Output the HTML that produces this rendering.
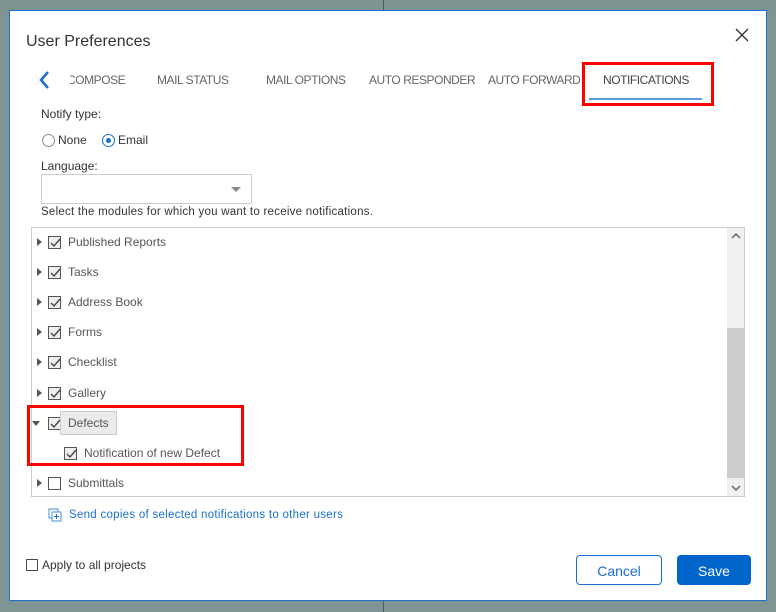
<!DOCTYPE html>
<html><head><meta charset="utf-8"><style>
*{box-sizing:border-box;margin:0;padding:0}
body{width:776px;height:612px;background:#7f9593;position:relative;overflow:hidden;font-family:"Liberation Sans",sans-serif;color:#333}
.a{position:absolute;white-space:nowrap}
#dlg{position:absolute;left:9px;top:10px;width:758px;height:591px;background:#fff;border:1px solid #1a6fd0}
.tab{position:absolute;top:73px;font-size:12px;color:#666;letter-spacing:-0.45px}
.cb{position:absolute;width:13px;height:13px;border:1px solid #555;background:#eee}
.cb svg{position:absolute;left:1px;top:0}
.tri{position:absolute;width:0;height:0;border-top:4px solid transparent;border-bottom:4px solid transparent;border-left:5px solid #555}
.lbl{position:absolute;font-size:12px;color:#555}
</style></head><body>
<div class="a" style="left:0;top:0;width:776px;height:10px;background:#7d9390"></div>
<div class="a" style="left:383px;top:0;width:1px;height:10px;background:#556"></div>
<div class="a" style="left:383px;top:601px;width:1px;height:11px;background:#556"></div>
<div id="dlg"></div>
<div class="a" style="left:26px;top:33px;font-size:16px;color:#333">User Preferences</div>
<svg class="a" style="left:735px;top:28px" width="14" height="14"><path d="M1 1L13 13M13 1L1 13" stroke="#333" stroke-width="1.3"/></svg>
<svg class="a" style="left:38px;top:70px" width="12" height="20"><path d="M10 2L3 10L10 18" stroke="#1a6fd0" stroke-width="2.5" fill="none"/></svg>
<div class="a" style="left:70px;top:66px;width:60px;height:24px;overflow:hidden"><div class="tab" style="left:-3px;top:7px">COMPOSE</div></div>
<div class="tab" style="left:157px">MAIL STATUS</div>
<div class="tab" style="left:266px">MAIL OPTIONS</div>
<div class="tab" style="left:369px">AUTO RESPONDER</div>
<div class="tab" style="left:488px">AUTO FORWARD</div>
<div class="tab" style="left:603px;color:#444">NOTIFICATIONS</div>
<div class="a" style="left:589px;top:98px;width:113px;height:2px;background:#5b9ad8"></div>
<div class="a" style="left:582px;top:62px;width:132px;height:44px;border:3px solid #f00"></div>
<div class="a" style="left:41px;top:107px;font-size:12px">Notify type:</div>
<div class="a" style="left:42px;top:134px;width:13px;height:13px;border:1px solid #888;border-radius:50%"></div>
<div class="a" style="left:58px;top:133px;font-size:12px">None</div>
<div class="a" style="left:102px;top:134px;width:13px;height:13px;border:1.5px solid #1a6fd0;border-radius:50%"></div>
<div class="a" style="left:106px;top:138px;width:5px;height:5px;background:#1a6fd0;border-radius:50%"></div>
<div class="a" style="left:118px;top:133px;font-size:12px">Email</div>
<div class="a" style="left:41px;top:159px;font-size:12px">Language:</div>
<div class="a" style="left:41px;top:174px;width:211px;height:30px;border:1px solid #ccc"></div>
<div class="a" style="left:231px;top:187px;border-left:5px solid transparent;border-right:5px solid transparent;border-top:5px solid #888"></div>
<div class="a" style="left:41px;top:206px;font-size:11.5px;letter-spacing:0.25px">Select the modules for which you want to receive notifications.</div>
<div class="a" style="left:31px;top:227px;width:714px;height:270px;border:1px solid #ccc"></div>
<div class="a" style="left:727px;top:228px;width:17px;height:268px;background:#f0f0f0"></div>
<div class="a" style="left:727px;top:328px;width:17px;height:150px;background:#cdcdcd"></div>
<svg class="a" style="left:731px;top:232px" width="10" height="8"><path d="M1 6L5 2L9 6" stroke="#666" stroke-width="1.5" fill="none"/></svg>
<svg class="a" style="left:731px;top:484px" width="10" height="8"><path d="M1 2L5 6L9 2" stroke="#666" stroke-width="1.5" fill="none"/></svg>

<div class="tri" style="left:37px;top:238px"></div><div class="cb" style="left:48px;top:236px"><svg width="11" height="11"><path d="M1 6L4 9L10 2" stroke="#444" stroke-width="1.4" fill="none"/></svg></div><div class="lbl" style="left:68px;top:235px">Published Reports</div>
<div class="tri" style="left:37px;top:268px"></div><div class="cb" style="left:48px;top:266px"><svg width="11" height="11"><path d="M1 6L4 9L10 2" stroke="#444" stroke-width="1.4" fill="none"/></svg></div><div class="lbl" style="left:68px;top:265px">Tasks</div>
<div class="tri" style="left:37px;top:298px"></div><div class="cb" style="left:48px;top:296px"><svg width="11" height="11"><path d="M1 6L4 9L10 2" stroke="#444" stroke-width="1.4" fill="none"/></svg></div><div class="lbl" style="left:68px;top:295px">Address Book</div>
<div class="tri" style="left:37px;top:328px"></div><div class="cb" style="left:48px;top:326px"><svg width="11" height="11"><path d="M1 6L4 9L10 2" stroke="#444" stroke-width="1.4" fill="none"/></svg></div><div class="lbl" style="left:68px;top:325px">Forms</div>
<div class="tri" style="left:37px;top:358px"></div><div class="cb" style="left:48px;top:356px"><svg width="11" height="11"><path d="M1 6L4 9L10 2" stroke="#444" stroke-width="1.4" fill="none"/></svg></div><div class="lbl" style="left:68px;top:355px">Checklist</div>
<div class="tri" style="left:37px;top:389px"></div><div class="cb" style="left:48px;top:387px"><svg width="11" height="11"><path d="M1 6L4 9L10 2" stroke="#444" stroke-width="1.4" fill="none"/></svg></div><div class="lbl" style="left:68px;top:386px">Gallery</div>
<div class="a" style="left:32px;top:421px;border-left:4px solid transparent;border-right:4px solid transparent;border-top:5px solid #555"></div>
<div class="cb" style="left:48px;top:417px"><svg width="11" height="11"><path d="M1 6L4 9L10 2" stroke="#444" stroke-width="1.4" fill="none"/></svg></div>
<div class="a" style="left:60px;top:411px;width:57px;height:24px;background:#ebebeb;border:1px solid #ccc"></div>
<div class="lbl" style="left:68px;top:416px">Defects</div>
<div class="cb" style="left:64px;top:447px"><svg width="11" height="11"><path d="M1 6L4 9L10 2" stroke="#444" stroke-width="1.4" fill="none"/></svg></div><div class="lbl" style="left:84px;top:446px">Notification of new Defect</div>
<div class="a" style="left:27px;top:405px;width:217px;height:61px;border:3px solid #f00"></div>
<div class="tri" style="left:37px;top:479px"></div><div class="cb" style="left:48px;top:477px;background:#fff"></div><div class="lbl" style="left:68px;top:476px">Submittals</div>

<svg class="a" style="left:48px;top:508px" width="15" height="15"><rect x="1" y="1" width="9" height="9" fill="none" stroke="#4a8ed8"/><rect x="4" y="4" width="9" height="9" fill="#fff" stroke="#4a8ed8"/><path d="M8.5 6V11M6 8.5H11" stroke="#1a6fd0"/></svg>
<div class="a" style="left:69px;top:509px;font-size:11.5px;color:#1a6fd0;letter-spacing:0.28px">Send copies of selected notifications to other users</div>
<div class="a" style="left:26px;top:559px;width:12px;height:12px;border:1px solid #444"></div>
<div class="a" style="left:42px;top:558px;font-size:12px">Apply to all projects</div>
<div class="a" style="left:576px;top:555px;width:86px;height:30px;border:1px solid #1a6fd0;border-radius:4px;color:#1a6fd0;font-size:14px;text-align:center;line-height:31px">Cancel</div>
<div class="a" style="left:677px;top:555px;width:74px;height:30px;background:#0066cc;border-radius:4px;color:#fff;font-size:14px;text-align:center;line-height:32px">Save</div>
</body></html>
